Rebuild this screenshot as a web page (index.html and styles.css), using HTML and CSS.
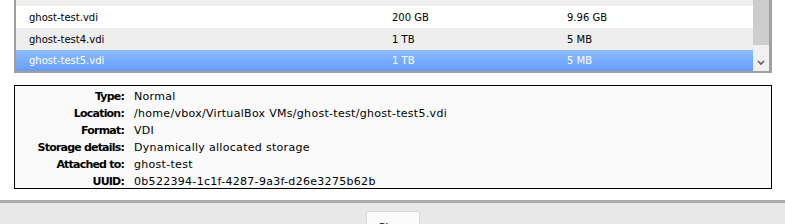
FILE: index.html
```html
<!DOCTYPE html>
<html lang="en">

<head>
  <meta charset="UTF-8">
  <title>Virtual Media Manager</title>
  <link rel="stylesheet" href="styles.css">
</head>

<body>

  <div class="list">
    <div class="rows">
      <div class="row row-top"></div>
      <div class="row">
        <span class="c-name">ghost-test.vdi</span>
        <span class="c-size">200 GB</span>
        <span class="c-actual">9.96 GB</span>
      </div>
      <div class="row row-alt">
        <span class="c-name">ghost-test4.vdi</span>
        <span class="c-size">1 TB</span>
        <span class="c-actual">5 MB</span>
      </div>
      <div class="row row-sel">
        <span class="c-name">ghost-test5.vdi</span>
        <span class="c-size">1 TB</span>
        <span class="c-actual">5 MB</span>
      </div>
    </div>
    <div class="scroll">
      <div class="thumb"></div>
      <div class="track">
        <svg width="10" height="8" viewBox="0 0 10 8"><path d="M2 2 L5 5 L8 2" fill="none" stroke="#606060" stroke-width="1.6"/></svg>
      </div>
    </div>
  </div>

  <!-- details of selected medium -->
  <div class="details">
    <div class="lbl">Type:</div><div class="val">Normal</div>
    <div class="lbl">Location:</div><div class="val">/home/vbox/VirtualBox VMs/ghost-test/ghost-test5.vdi</div>
    <div class="lbl">Format:</div><div class="val">VDI</div>
    <div class="lbl">Storage details:</div><div class="val">Dynamically allocated storage</div>
    <div class="lbl">Attached to:</div><div class="val">ghost-test</div>
    <div class="lbl">UUID:</div><div class="val">0b522394-1c1f-4287-9a3f-d26e3275b62b</div>
  </div>

  <div class="footer">
    <button class="btn">Close</button>
  </div>

</body>

</html>
```

FILE: styles.css
```css
* {
  margin: 0;
  padding: 0;
  box-sizing: border-box;
}

body {
  background: #fff;
  font-family: "DejaVu Sans", Verdana, sans-serif;
  font-size: 11px;
  color: #000;
  width: 785px;
  height: 224px;
  overflow: hidden;
}

.list {
  display: flex;
  margin-left: 14px;
  width: 758px;
  height: 73px;
  border-left: 2px solid #a0a0a0;
  border-right: 3px solid #a0a0a0;
  border-bottom: 2px solid #a0a0a0;
}

.rows {
  flex: 1;
}

.row {
  display: flex;
  height: 22px;
  align-items: center;
  padding-left: 13px;
  font-size: 10px;
}

.row-top {
  height: 6px;
  background: #eeeeee;
}

.row-alt {
  background: #eeeeee;
}

.row-sel {
  height: 21px;
  color: #fff;
  background: linear-gradient(#8bbcff, #689dff);
}

.c-name {
  width: 363px;
}

.c-size {
  width: 175px;
}

.scroll {
  width: 16px;
  display: flex;
  flex-direction: column;
  background: #f0f0f0;
}

.thumb {
  height: 45px;
  background: #cdcdcd;
}

.track {
  flex: 1;
  display: flex;
  align-items: flex-end;
  justify-content: center;
  padding-bottom: 4px;
}

.details {
  margin: 12px 0 0 14px;
  width: 758px;
  height: 104px;
  border: 1px solid #000;
  background: #fafafa;
  display: grid;
  grid-template-columns: 109px auto;
  column-gap: 10px;
  align-content: start;
  padding-top: 2px;
  line-height: 17px;
}

.lbl {
  font-weight: bold;
  text-align: right;
  letter-spacing: -0.8px;
  white-space: nowrap;
}

.val {
  letter-spacing: 0.3px;
}

.footer {
  margin-top: 11px;
  height: 24px;
  border-top: 3px solid #aaaaaa;
  background: #e8e8e8;
  display: flex;
  justify-content: center;
  padding-top: 8px;
}

.btn {
  width: 54px;
  height: 24px;
  border: 1px solid #d8d8d8;
  border-radius: 3px;
  background: #fbfbfb;
  font-family: "DejaVu Sans", Verdana, sans-serif;
  font-size: 11px;
  padding-top: 9px;
  display: flex;
  justify-content: center;
}
```
